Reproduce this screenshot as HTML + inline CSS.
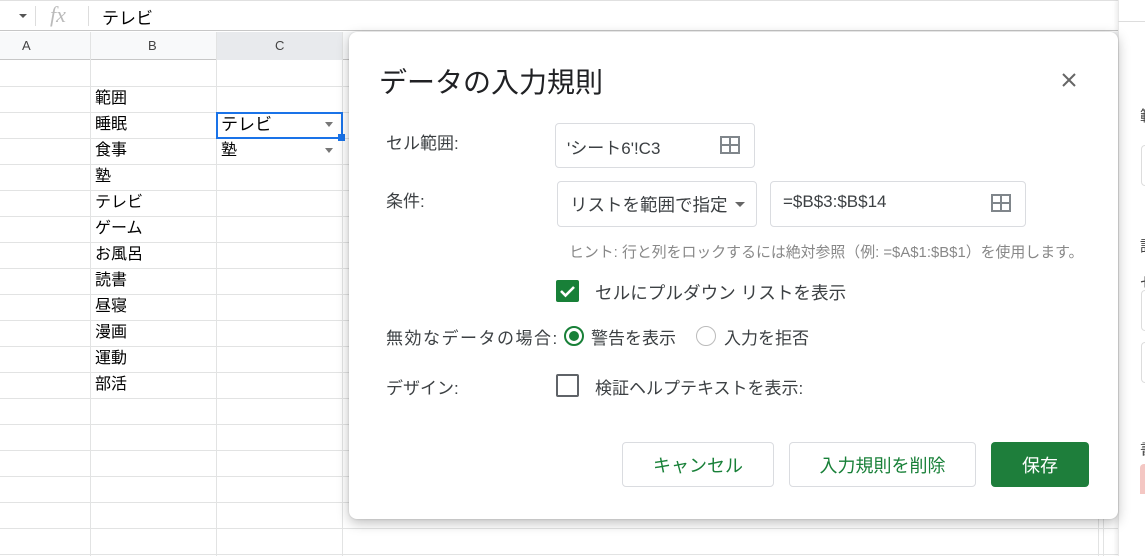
<!DOCTYPE html>
<html><head><meta charset="utf-8"><style>
*{box-sizing:border-box;margin:0;padding:0}
body{width:1145px;height:556px;overflow:hidden;background:#fff;font-family:"Liberation Sans","Noto Sans CJK JP",sans-serif;position:relative;color:#202124}
.abs{position:absolute}
.vl{position:absolute;width:1px;background:#e2e3e3}
.hl{position:absolute;height:1px;background:#e2e3e3;left:0;width:1118px}
.cell{position:absolute;font-size:16px;color:#000;line-height:18px}
.box{position:absolute;border:1px solid #dadce0;border-radius:4px;background:#fff}
.lbl{position:absolute;font-size:17px;color:#3c4043}
</style></head><body>
<div class="abs" style="left:0;top:0;width:1118px;height:31px;border-bottom:1px solid #c7c7c7;border-top:1px solid #e0e0e0"></div>
<div class="abs" style="left:19px;top:14px;border-left:4px solid transparent;border-right:4px solid transparent;border-top:4px solid #555"></div>
<div class="abs" style="left:35px;top:6px;width:1px;height:20px;background:#ddd"></div>
<div class="abs" style="left:50px;top:2px;font:italic 22px 'Liberation Serif',serif;color:#bbb">fx</div>
<div class="abs" style="left:88px;top:6px;width:1px;height:20px;background:#ddd"></div>
<div class="abs" style="left:102px;top:4px;font-size:17px;color:#000">テレビ</div>
<div class="abs" style="left:0;top:32px;width:1118px;height:28px;background:#f8f9fa;border-bottom:1px solid #c7c7c7"></div>
<div class="abs" style="left:217px;top:32px;width:126px;height:28px;background:#e8eaed"></div>
<div class="abs" style="left:22px;top:38px;font-size:13px;color:#444">A</div>
<div class="abs" style="left:148px;top:38px;font-size:13px;color:#444">B</div>
<div class="abs" style="left:275px;top:38px;font-size:13px;color:#444">C</div>
<div class="vl" style="left:90px;top:32px;height:524px"></div>
<div class="vl" style="left:216px;top:32px;height:524px"></div>
<div class="vl" style="left:342px;top:32px;height:524px"></div>
<div class="vl" style="left:1098px;top:32px;height:524px"></div>
<div class="vl" style="left:1103px;top:32px;height:524px"></div>
<div class="hl" style="top:86px"></div><div class="hl" style="top:112px"></div><div class="hl" style="top:138px"></div><div class="hl" style="top:164px"></div><div class="hl" style="top:190px"></div><div class="hl" style="top:216px"></div><div class="hl" style="top:242px"></div><div class="hl" style="top:268px"></div><div class="hl" style="top:294px"></div><div class="hl" style="top:320px"></div><div class="hl" style="top:346px"></div><div class="hl" style="top:372px"></div><div class="hl" style="top:398px"></div><div class="hl" style="top:424px"></div><div class="hl" style="top:450px"></div><div class="hl" style="top:476px"></div><div class="hl" style="top:502px"></div><div class="hl" style="top:528px"></div><div class="hl" style="top:554px"></div>
<div class="cell" style="left:95px;top:90px">範囲</div>
<div class="cell" style="left:95px;top:116px">睡眠</div>
<div class="cell" style="left:95px;top:142px">食事</div>
<div class="cell" style="left:95px;top:168px">塾</div>
<div class="cell" style="left:95px;top:194px">テレビ</div>
<div class="cell" style="left:95px;top:220px">ゲーム</div>
<div class="cell" style="left:95px;top:246px">お風呂</div>
<div class="cell" style="left:95px;top:272px">読書</div>
<div class="cell" style="left:95px;top:298px">昼寝</div>
<div class="cell" style="left:95px;top:324px">漫画</div>
<div class="cell" style="left:95px;top:350px">運動</div>
<div class="cell" style="left:95px;top:376px">部活</div>
<div class="abs" style="left:216px;top:112px;width:127px;height:27px;border:2px solid #1a73e8"></div>
<div class="abs" style="left:338px;top:134px;width:7px;height:7px;background:#1a73e8"></div>
<div class="cell" style="left:221px;top:116px;font-size:17px">テレビ</div>
<div class="cell" style="left:221px;top:142px">塾</div>
<div class="abs" style="left:325px;top:122px;border-left:4px solid transparent;border-right:4px solid transparent;border-top:5px solid #777"></div>
<div class="abs" style="left:325px;top:148px;border-left:4px solid transparent;border-right:4px solid transparent;border-top:5px solid #777"></div>
<div class="abs" style="left:1118px;top:0;width:27px;height:556px;background:#fff;border-left:1px solid #e8e8e8;box-shadow:-2px 0 4px rgba(0,0,0,.08)"></div>
<div class="abs" style="left:1118px;top:21px;width:27px;height:1px;background:#ddd"></div>
<div class="abs" style="left:1140px;top:105px;font-size:15px;color:#444;width:5px;overflow:hidden">範</div>
<div class="abs" style="left:1141px;top:145px;width:10px;height:41px;border:1px solid #ddd;border-radius:4px"></div>
<div class="abs" style="left:1140px;top:235px;font-size:15px;color:#444;width:5px;overflow:hidden">設</div>
<div class="abs" style="left:1140px;top:272px;font-size:15px;color:#444;width:5px;overflow:hidden">セ</div>
<div class="abs" style="left:1141px;top:290px;width:10px;height:41px;border:1px solid #ddd;border-radius:4px"></div>
<div class="abs" style="left:1141px;top:342px;width:10px;height:41px;border:1px solid #ddd;border-radius:4px"></div>
<div class="abs" style="left:1140px;top:438px;font-size:15px;color:#444;width:5px;overflow:hidden">書</div>
<div class="abs" style="left:1140px;top:464px;width:10px;height:30px;background:#f4c7c3;border-radius:4px 0 0 0"></div>
<div class="abs" style="left:349px;top:32px;width:769px;height:487px;background:#fff;border-radius:8px;box-shadow:0 4px 12px rgba(0,0,0,.25),0 0 2px rgba(0,0,0,.15)"></div>
<div class="abs" style="left:379px;top:61px;font-size:28px;color:#202124">データの入力規則</div>
<svg class="abs" style="left:1061px;top:72px" width="16" height="16"><path d="M2 2L14 14M14 2L2 14" stroke="#666" stroke-width="2"/></svg>
<div class="lbl" style="left:386px;top:129px">セル範囲:</div>
<div class="box" style="left:555px;top:123px;width:200px;height:45px"></div>
<div class="abs" style="left:567px;top:134px;font-size:17px;color:#3c4043">'シート6'!C3</div>
<svg class="abs" style="left:720px;top:136px" width="20" height="18"><rect x="1" y="1" width="18" height="16" fill="none" stroke="#80868b" stroke-width="2"/><path d="M10 1V17M1 9H19" stroke="#80868b" stroke-width="2"/></svg>
<div class="lbl" style="left:386px;top:187px">条件:</div>
<div class="box" style="left:557px;top:181px;width:200px;height:46px"></div>
<div class="abs" style="left:570px;top:192px;font-size:17.5px;color:#3c4043">リストを範囲で指定</div>
<div class="abs" style="left:735px;top:202px;border-left:5px solid transparent;border-right:5px solid transparent;border-top:5px solid #666"></div>
<div class="box" style="left:770px;top:181px;width:256px;height:46px"></div>
<div class="abs" style="left:783px;top:192px;font-size:17px;color:#3c4043">=$B$3:$B$14</div>
<svg class="abs" style="left:991px;top:194px" width="20" height="18"><rect x="1" y="1" width="18" height="16" fill="none" stroke="#80868b" stroke-width="2"/><path d="M10 1V17M1 9H19" stroke="#80868b" stroke-width="2"/></svg>
<div class="abs" style="left:569px;top:241px;font-size:14.9px;color:#888;white-space:nowrap">ヒント: 行と列をロックするには絶対参照（例: =$A$1:$B$1）を使用します。</div>
<div class="abs" style="left:556px;top:280px;width:23px;height:22px;background:#188038;border-radius:2px"></div>
<svg class="abs" style="left:556px;top:280px" width="23" height="22"><path d="M5 11L9.5 15.5L18 7" stroke="#fff" stroke-width="2.6" fill="none"/></svg>
<div class="abs" style="left:595px;top:280px;font-size:17.6px;color:#3c4043;white-space:nowrap">セルにプルダウン リストを表示</div>
<div class="lbl" style="left:386px;top:324px;letter-spacing:1.5px;white-space:nowrap">無効なデータの場合:</div>
<div class="abs" style="left:564px;top:326px;width:20px;height:20px;border:2px solid #188038;border-radius:50%"></div>
<div class="abs" style="left:569px;top:331px;width:10px;height:10px;background:#188038;border-radius:50%"></div>
<div class="abs" style="left:591px;top:324px;font-size:17px;color:#3c4043">警告を表示</div>
<div class="abs" style="left:696px;top:326px;width:20px;height:20px;border:1px solid #bbb;border-radius:50%"></div>
<div class="abs" style="left:724px;top:324px;font-size:17px;color:#3c4043">入力を拒否</div>
<div class="lbl" style="left:386px;top:374px">デザイン:</div>
<div class="abs" style="left:556px;top:374px;width:23px;height:23px;border:2px solid #5f6368;border-radius:2px"></div>
<div class="abs" style="left:595px;top:374px;font-size:17px;color:#3c4043">検証ヘルプテキストを表示:</div>
<div class="box" style="left:622px;top:442px;width:152px;height:45px"></div>
<div class="abs" style="left:622px;top:452px;width:152px;text-align:center;font-size:18px;color:#188038">キャンセル</div>
<div class="box" style="left:789px;top:442px;width:187px;height:45px"></div>
<div class="abs" style="left:789px;top:452px;width:187px;text-align:center;font-size:18px;color:#188038">入力規則を削除</div>
<div class="abs" style="left:991px;top:442px;width:98px;height:45px;background:#1e7e3b;border-radius:4px"></div>
<div class="abs" style="left:991px;top:452px;width:98px;text-align:center;font-size:18px;color:#fff">保存</div>
</body></html>
